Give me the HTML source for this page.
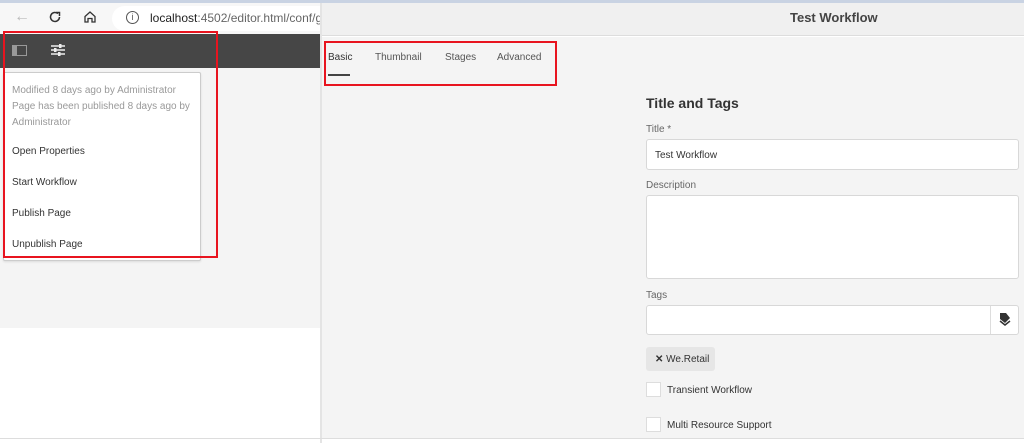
<!DOCTYPE html>
<html><head><style>
*{box-sizing:border-box;margin:0;padding:0}
body{width:1024px;height:443px;overflow:hidden;position:relative;background:#fff;font-family:"Liberation Sans",sans-serif;font-size:10px;color:#333}
.a{position:absolute}
.lbl{color:#666;font-size:10px}
.inp{background:#fff;border:1px solid #d8d8d8;border-radius:3px}
</style></head><body>
<div class="a" style="left:0;top:0;width:1024px;height:3px;background:#c9d3e3"></div>
<div class="a" style="left:0;top:3px;width:320px;height:31px;background:#f7f7f7"></div>
<div class="a" style="left:14px;top:8px;font-size:16px;color:#bbb">←</div>
<svg class="a" style="left:48px;top:10px" width="14" height="14" viewBox="0 0 14 14"><path d="M11.5 7A4.5 4.5 0 1 1 10 3.6" stroke="#333" stroke-width="1.5" fill="none"/><path d="M8 2.5h3.5V6" stroke="#333" stroke-width="1.5" fill="none"/></svg>
<svg class="a" style="left:83px;top:10px" width="14" height="14" viewBox="0 0 14 14"><path d="M2 6.5L7 2l5 4.5V12H9V8.5H5V12H2z" stroke="#333" stroke-width="1.3" fill="none"/></svg>
<div class="a" style="left:112px;top:6px;width:210px;height:25px;background:#fff;border-radius:13px 0 0 13px;overflow:hidden"></div>
<div class="a" style="left:126px;top:11px;width:13px;height:13px;border:1px solid #555;border-radius:50%;font-size:9px;text-align:center;line-height:11px;color:#555">i</div>
<div class="a" style="left:150px;top:11px;width:170px;overflow:hidden;font-size:12px;color:#222;white-space:nowrap">localhost<span style="color:#666">:4502/editor.html/conf/glo</span></div>
<div class="a" style="left:0;top:34px;width:320px;height:34px;background:#464646"></div>
<div class="a" style="left:12px;top:45px;width:15px;height:11px;border:1px solid #999"><div style="width:4px;height:9px;background:#999"></div></div>
<svg class="a" style="left:50px;top:43px" width="16" height="14"><g stroke="#eee" stroke-width="1.5"><line x1="1" y1="3" x2="15" y2="3"/><line x1="1" y1="7" x2="15" y2="7"/><line x1="1" y1="11" x2="15" y2="11"/></g><g fill="#eee"><rect x="9" y="1" width="2.5" height="4"/><rect x="4" y="5" width="2.5" height="4"/><rect x="8" y="9" width="2.5" height="4"/></g></svg>
<div class="a" style="left:0;top:68px;width:320px;height:260px;background:#f4f4f4"></div>
<div class="a" style="left:3px;top:72px;width:198px;height:189px;background:#fff;border:1px solid #ccc;border-radius:2px;box-shadow:0 1px 2px rgba(0,0,0,.1)"></div>
<div class="a" style="left:12px;top:83px;color:#999;line-height:16px;width:185px">Modified 8 days ago by Administrator<br>Page has been published 8 days ago by<br>Administrator</div>
<div class="a" style="left:12px;top:146px">Open Properties</div>
<div class="a" style="left:12px;top:177px">Start Workflow</div>
<div class="a" style="left:12px;top:208px">Publish Page</div>
<div class="a" style="left:12px;top:239px">Unpublish Page</div>
<div class="a" style="left:3px;top:31px;width:215px;height:227px;border:2px solid #e8141f"></div>
<div class="a" style="left:320px;top:3px;width:2px;height:440px;background:#e4e4e4"></div>
<div class="a" style="left:322px;top:3px;width:702px;height:33px;background:#f0f0f0;border-bottom:1px solid #ddd"></div>
<div class="a" style="left:790px;top:10px;font-size:13px;font-weight:bold;color:#444">Test Workflow</div>
<div class="a" style="left:322px;top:37px;width:702px;height:401px;background:#f4f4f4"></div>
<div class="a" style="left:328px;top:52px;color:#333">Basic</div>
<div class="a" style="left:375px;top:52px;color:#555">Thumbnail</div>
<div class="a" style="left:445px;top:52px;color:#555">Stages</div>
<div class="a" style="left:497px;top:52px;color:#555">Advanced</div>
<div class="a" style="left:328px;top:74px;width:22px;height:2px;background:#444"></div>
<div class="a" style="left:324px;top:41px;width:233px;height:45px;border:2px solid #e8141f"></div>
<div class="a" style="left:646px;top:95px;font-size:14px;font-weight:bold;color:#333">Title and Tags</div>
<div class="a lbl" style="left:646px;top:124px">Title *</div>
<div class="a inp" style="left:646px;top:139px;width:373px;height:31px"></div>
<div class="a" style="left:655px;top:150px;color:#333">Test Workflow</div>
<div class="a lbl" style="left:646px;top:180px">Description</div>
<div class="a inp" style="left:646px;top:195px;width:373px;height:84px"></div>
<div class="a lbl" style="left:646px;top:290px">Tags</div>
<div class="a inp" style="left:646px;top:305px;width:373px;height:30px"></div>
<div class="a" style="left:990px;top:306px;width:1px;height:28px;background:#ddd"></div>
<svg class="a" style="left:998px;top:311px" width="14" height="16" viewBox="0 0 14 16"><path d="M2 2h6l4 5-5 5-5-4z" fill="#333"/><path d="M2 10l5 4 5-4" stroke="#333" stroke-width="1.5" fill="none"/></svg>
<div class="a" style="left:646px;top:347px;width:69px;height:24px;background:#e6e6e6;border-radius:3px"></div>
<div class="a" style="left:655px;top:354px;color:#333"><b>✕</b> We.Retail</div>
<div class="a" style="left:646px;top:382px;width:15px;height:15px;background:#fff;border:1px solid #ddd"></div>
<div class="a" style="left:667px;top:385px">Transient Workflow</div>
<div class="a" style="left:646px;top:417px;width:15px;height:15px;background:#fff;border:1px solid #ddd"></div>
<div class="a" style="left:667px;top:420px">Multi Resource Support</div>
<div class="a" style="left:0;top:438px;width:1024px;height:1px;background:#ddd"></div>
</body></html>
